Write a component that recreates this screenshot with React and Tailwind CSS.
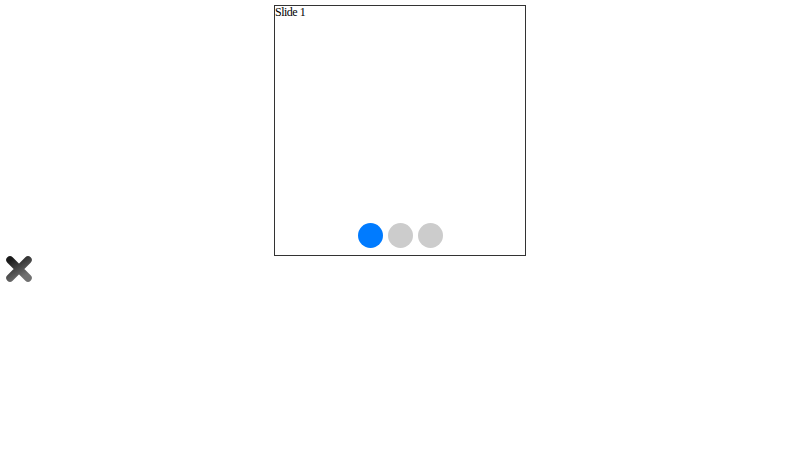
export default function App() {
  return (
    <div className="bg-white w-[800px] h-[450px]" style={{ fontFamily: '"Liberation Serif", serif' }}>
      <div className="relative mx-auto mt-[5px] w-[252px] h-[251px] border border-[#333] text-[12px] leading-[13px] text-black">
        <div className="tracking-[-0.5px]">Slide 1</div>
        <div className="absolute left-0 right-0 bottom-[7px] flex justify-center gap-[5px]">
          <span className="w-[25px] h-[25px] rounded-full bg-[#007bff]" />
          <span className="w-[25px] h-[25px] rounded-full bg-[#cccccc]" />
          <span className="w-[25px] h-[25px] rounded-full bg-[#cccccc]" />
        </div>
      </div>
      <div className="pl-[5px] -mt-[1px]">
        <svg width="28" height="28" viewBox="0 0 28 28" className="block">
          <defs>
            <linearGradient id="xg" x1="0" y1="0" x2="0.6" y2="1">
              <stop offset="0" stopColor="#1a1a1a" />
              <stop offset="1" stopColor="#707070" />
            </linearGradient>
          </defs>
          <path d="M5 5 L23 23 M23 5 L5 23" stroke="url(#xg)" strokeWidth="7.5" strokeLinecap="round" />
        </svg>
      </div>
    </div>
  );
}
